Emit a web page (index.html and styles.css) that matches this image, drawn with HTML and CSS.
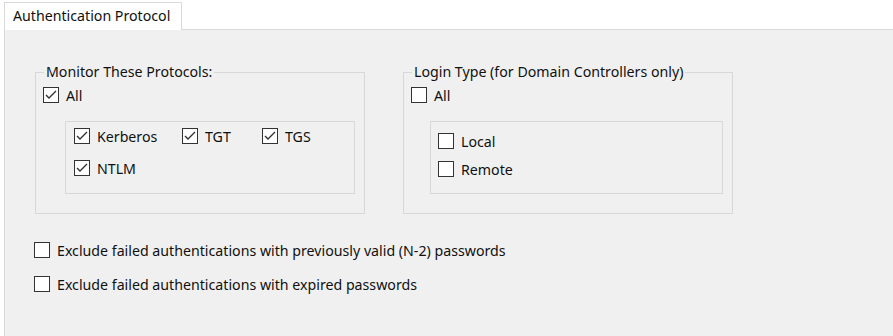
FILE: index.html
```html
<!DOCTYPE html>
<html>
<head>
<meta charset="utf-8">
<link rel="stylesheet" href="styles.css">
</head>
<body>
<div class="window">
  <div class="tabstrip">
    <div class="tab">Authentication Protocol</div>
    <div class="tab-fill"></div>
  </div>
  <div class="panel">
    <div class="groups">
      <fieldset class="group">
        <legend>Monitor These Protocols:</legend>
        <label class="cb"><span class="box checked"><svg viewBox="0 0 14 14"><polyline points="2,7 5,10 12,3"/></svg></span><span>All</span></label>
        <div class="inner inner-protocols">
          <label class="cb"><span class="box checked"><svg viewBox="0 0 14 14"><polyline points="2,7 5,10 12,3"/></svg></span><span>Kerberos</span></label>
          <label class="cb"><span class="box checked"><svg viewBox="0 0 14 14"><polyline points="2,7 5,10 12,3"/></svg></span><span>TGT</span></label>
          <label class="cb"><span class="box checked"><svg viewBox="0 0 14 14"><polyline points="2,7 5,10 12,3"/></svg></span><span>TGS</span></label>
          <label class="cb"><span class="box checked"><svg viewBox="0 0 14 14"><polyline points="2,7 5,10 12,3"/></svg></span><span>NTLM</span></label>
        </div>
      </fieldset>
      <fieldset class="group">
        <legend>Login Type (for Domain Controllers only)</legend>
        <label class="cb"><span class="box"></span><span>All</span></label>
        <div class="inner inner-login">
          <label class="cb"><span class="box"></span><span>Local</span></label>
          <label class="cb"><span class="box"></span><span>Remote</span></label>
        </div>
      </fieldset>
    </div>
    <div class="options">
      <label class="cb"><span class="box"></span><span>Exclude failed authentications with previously valid (N-2) passwords</span></label>
      <label class="cb"><span class="box"></span><span>Exclude failed authentications with expired passwords</span></label>
    </div>
  </div>
</div>
</body>
</html>
```

FILE: styles.css
```css
html, body {
  margin: 0;
  padding: 0;
  background: #ffffff;
}
body {
  font-family: "Noto Sans", "Open Sans", sans-serif;
  font-size: 14.2px;
  color: #111111;
  width: 893px;
  height: 336px;
  overflow: hidden;
}
.window {
  display: flex;
  flex-direction: column;
  height: 336px;
  padding-top: 2px;
  box-sizing: border-box;
}
.tabstrip {
  display: flex;
  padding-left: 4px;
  height: 28px;
  flex: none;
}
.tab {
  width: 168px;
  height: 27px;
  background: #ffffff;
  border: 1px solid #d9d9d9;
  border-bottom: none;
  padding-left: 8px;
  box-sizing: content-box;
  line-height: 25px;
  white-space: nowrap;
}
.tab-fill {
  flex: 1;
  border-bottom: 1px solid #d9d9d9;
}
.panel {
  flex: 1;
  margin-left: 4px;
  background: #f0f0f0;
  border-left: 1px solid #d9d9d9;
  padding: 32px 0 0 29px;
}
.groups {
  display: flex;
  gap: 38px;
  margin-left: 1px;
}
.group {
  width: 330px;
  box-sizing: border-box;
  margin: 0;
  border: 1px solid #d8d8d8;
  padding: 3px 9px 19px 7px;
  min-width: 0;
}
.group legend {
  padding: 0 2px;
  margin-left: 1px;
  line-height: 20px;
}
.cb {
  display: flex;
  align-items: center;
  gap: 7px;
  height: 20px;
  white-space: nowrap;
}
.box {
  width: 16px;
  height: 16px;
  box-sizing: border-box;
  border: 1px solid #333333;
  background: #ffffff;
  flex: none;
  display: flex;
}
.box svg {
  width: 14px;
  height: 14px;
}
.box svg polyline {
  fill: none;
  stroke: #333333;
  stroke-width: 1.4;
}
.inner {
  margin-top: 16px;
  border: 1px solid #d8d8d8;
  box-sizing: border-box;
  height: 73px;
}
.inner-protocols {
  margin-left: 22px;
  display: grid;
  grid-template-columns: 108px 80px 80px;
  row-gap: 12px;
  align-content: start;
  padding: 4px 0 0 8px;
}
.inner-login {
  margin-left: 19px;
  display: flex;
  flex-direction: column;
  gap: 8px;
  padding: 9px 0 0 7px;
}
.options {
  margin-top: 26px;
  display: flex;
  flex-direction: column;
  gap: 14px;
}
```
